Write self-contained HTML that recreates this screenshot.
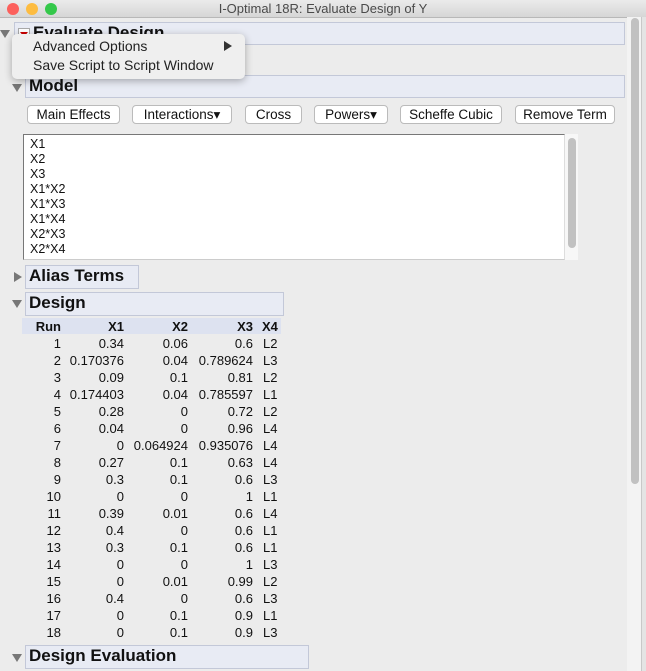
<!DOCTYPE html>
<html><head><style>
body{margin:0;width:646px;height:671px;background:#ececec;font-family:"Liberation Sans",sans-serif;position:relative;overflow:hidden;font-size:13px;color:#111}
.a{position:absolute}
.tb{left:0;top:0;width:646px;height:17px;background:linear-gradient(#ebebeb,#d6d6d6);border-bottom:1px solid #b8b8b8;text-align:center;font-size:13px;line-height:17px;color:#4a4a4a}
.dot{width:12px;height:12px;border-radius:50%;top:3px}
.hdr{background:#e8ebf4;border:1px solid #c3c8d8;font-weight:bold;font-size:17px;line-height:20px;padding-left:3px;box-sizing:border-box}
.tri{width:0;height:0;border-left:5px solid transparent;border-right:5px solid transparent;border-top:8px solid #777}
.trr{width:0;height:0;border-top:5px solid transparent;border-bottom:5px solid transparent;border-left:8px solid #777}
.btn{top:105px;height:19px;background:#fff;border:1px solid #bbb;border-radius:4px;box-sizing:border-box;font-size:13.5px;line-height:17px;text-align:center}
.r{position:absolute;font-size:13px;line-height:17px}
</style></head><body>
<div class="a tb">I-Optimal 18R: Evaluate Design of Y</div>
<div class="a dot" style="left:7px;background:#fc605c"></div>
<div class="a dot" style="left:26px;background:#fdbc40"></div>
<div class="a dot" style="left:45px;background:#34c84a"></div>

<div class="a tri" style="left:0;top:30px"></div>
<div class="a hdr" style="left:14px;top:22px;width:611px;height:23px;padding-left:18px">Evaluate Design</div>
<div class="a" style="left:18px;top:28px;width:10px;height:10px;background:#fff;border:1px solid #aaa"></div>
<div class="a" style="left:20px;top:32px;border-left:4px solid transparent;border-right:4px solid transparent;border-top:5px solid #c00"></div>

<div class="a tri" style="left:12px;top:84px"></div>
<div class="a hdr" style="left:25px;top:75px;width:600px;height:23px">Model</div>

<div class="a" style="left:12px;top:34px;width:233px;height:45px;background:#efefef;border-radius:5px;box-shadow:0 2px 8px rgba(0,0,0,.3);font-size:14px;line-height:19px;color:#222">
<div style="position:absolute;left:21px;top:3px">Advanced Options</div>
<div style="position:absolute;left:21px;top:22px">Save Script to Script Window</div>
<div style="position:absolute;left:212px;top:7px;border-top:5px solid transparent;border-bottom:5px solid transparent;border-left:8px solid #333"></div>
</div>

<div class="a btn" style="left:27px;width:93px">Main Effects</div>
<div class="a btn" style="left:132px;width:100px">Interactions▾</div>
<div class="a btn" style="left:245px;width:57px">Cross</div>
<div class="a btn" style="left:314px;width:74px">Powers▾</div>
<div class="a btn" style="left:400px;width:102px">Scheffe Cubic</div>
<div class="a btn" style="left:515px;width:100px">Remove Term</div>

<div class="a" style="left:23px;top:134px;width:542px;height:126px;background:#fff;border:1px solid #777;border-right-color:#ddd;border-bottom-color:#ccc;box-sizing:border-box;font-size:12.5px;line-height:15px;padding:2px 0 0 6px">X1<br>X2<br>X3<br>X1*X2<br>X1*X3<br>X1*X4<br>X2*X3<br>X2*X4</div>
<div class="a" style="left:565px;top:134px;width:13px;height:126px;background:#f7f7f7"></div>
<div class="a" style="left:568px;top:138px;width:8px;height:110px;background:#c1c1c1;border-radius:4px"></div>

<div class="a trr" style="left:14px;top:272px"></div>
<div class="a hdr" style="left:25px;top:265px;width:114px;height:24px">Alias Terms</div>
<div class="a tri" style="left:12px;top:300px"></div>
<div class="a hdr" style="left:25px;top:292px;width:259px;height:24px">Design</div>

<div class="a" style="left:22px;top:318px;width:259px;height:16px;background:#dde2f0"></div>
<div class="r" style="left:0;top:318px;width:61px;text-align:right;font-weight:bold">Run</div>
<div class="r" style="left:64px;top:318px;width:60px;text-align:right;font-weight:bold">X1</div>
<div class="r" style="left:128px;top:318px;width:60px;text-align:right;font-weight:bold">X2</div>
<div class="r" style="left:193px;top:318px;width:60px;text-align:right;font-weight:bold">X3</div>
<div class="r" style="left:262px;top:318px;font-weight:bold">X4</div>

<div class="r" style="left:0;top:335px;width:61px;text-align:right">1<br>2<br>3<br>4<br>5<br>6<br>7<br>8<br>9<br>10<br>11<br>12<br>13<br>14<br>15<br>16<br>17<br>18</div>
<div class="r" style="left:44px;top:335px;width:80px;text-align:right">0.34<br>0.170376<br>0.09<br>0.174403<br>0.28<br>0.04<br>0<br>0.27<br>0.3<br>0<br>0.39<br>0.4<br>0.3<br>0<br>0<br>0.4<br>0<br>0</div>
<div class="r" style="left:108px;top:335px;width:80px;text-align:right">0.06<br>0.04<br>0.1<br>0.04<br>0<br>0<br>0.064924<br>0.1<br>0.1<br>0<br>0.01<br>0<br>0.1<br>0<br>0.01<br>0<br>0.1<br>0.1</div>
<div class="r" style="left:173px;top:335px;width:80px;text-align:right">0.6<br>0.789624<br>0.81<br>0.785597<br>0.72<br>0.96<br>0.935076<br>0.63<br>0.6<br>1<br>0.6<br>0.6<br>0.6<br>1<br>0.99<br>0.6<br>0.9<br>0.9</div>
<div class="r" style="left:263px;top:335px">L2<br>L3<br>L2<br>L1<br>L2<br>L4<br>L4<br>L4<br>L3<br>L1<br>L4<br>L1<br>L1<br>L3<br>L2<br>L3<br>L1<br>L3</div>

<div class="a tri" style="left:12px;top:654px"></div>
<div class="a hdr" style="left:25px;top:645px;width:284px;height:24px">Design Evaluation</div>

<div class="a" style="left:627px;top:17px;width:14px;height:654px;background:#f3f3f3"></div>
<div class="a" style="left:631px;top:18px;width:8px;height:466px;background:#c1c1c1;border-radius:4px"></div>
<div class="a" style="left:641px;top:17px;width:5px;height:654px;background:#e4e4e4;border-left:1px solid #c8c8c8"></div>
</body></html>
